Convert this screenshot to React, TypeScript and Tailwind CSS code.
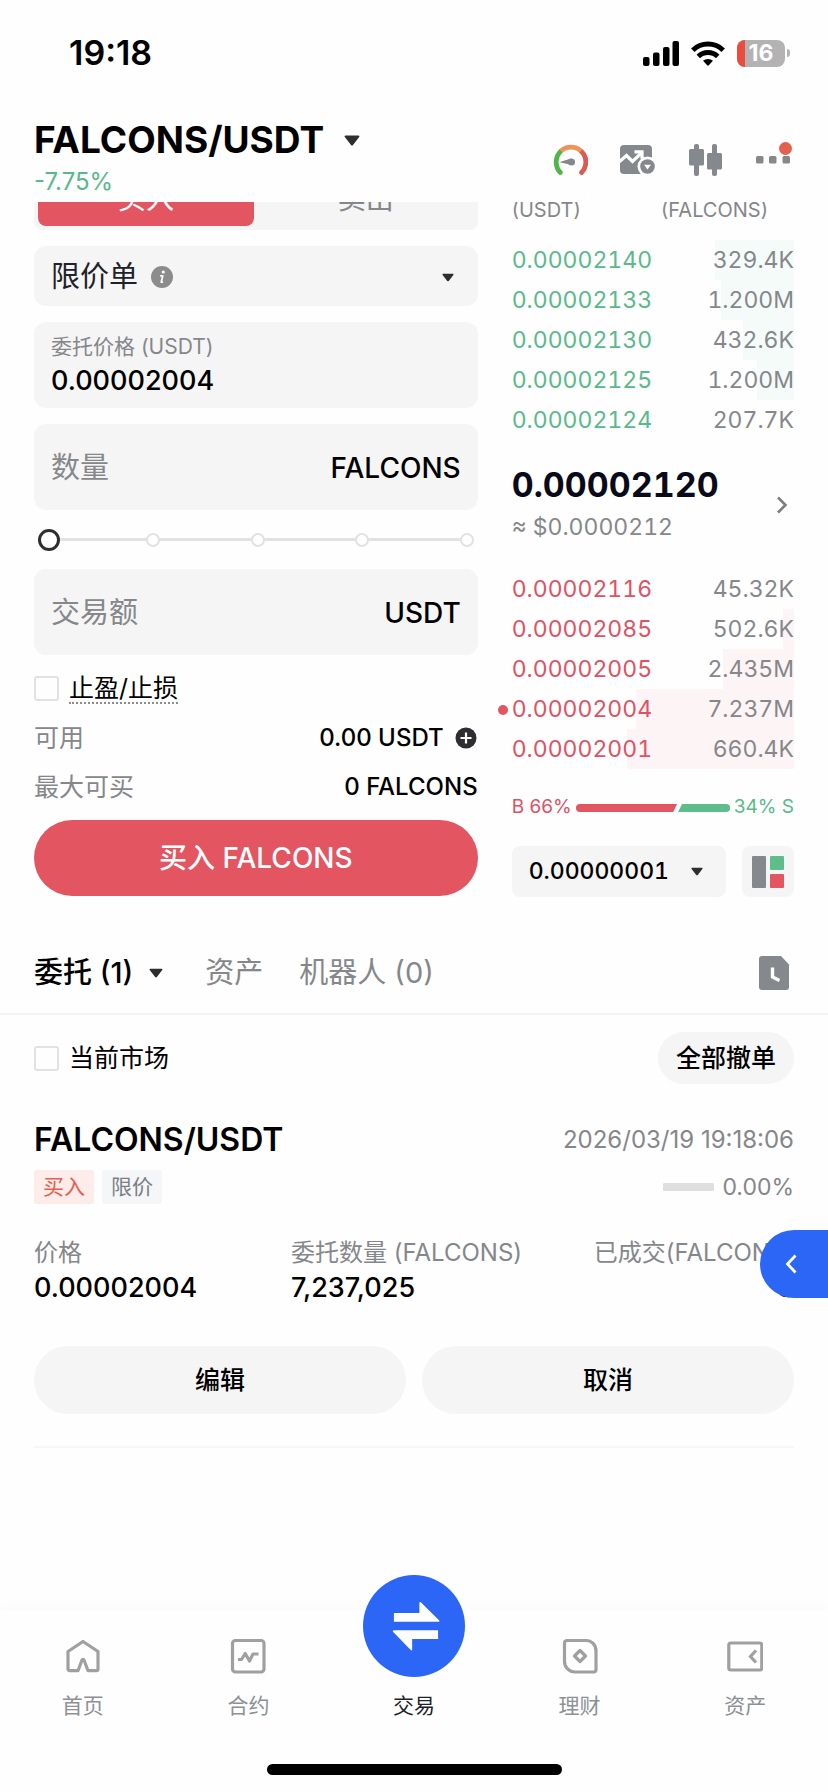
import { FunctionComponent, ReactNode } from "react";

type BookRow = {
  price: string;
  amount: string;
  depth: number;
  mine?: boolean;
};

const upperRows: BookRow[] = [
  { price: "0.00002140", amount: "329.4K", depth: 28 },
  { price: "0.00002133", amount: "1.200M", depth: 26 },
  { price: "0.00002130", amount: "432.6K", depth: 18 },
  { price: "0.00002125", amount: "1.200M", depth: 13 },
  { price: "0.00002124", amount: "207.7K", depth: 0 },
];

const lowerRows: BookRow[] = [
  { price: "0.00002116", amount: "45.32K", depth: 0 },
  { price: "0.00002085", amount: "502.6K", depth: 4 },
  { price: "0.00002005", amount: "2.435M", depth: 25 },
  { price: "0.00002004", amount: "7.237M", depth: 56, mine: true },
  { price: "0.00002001", amount: "660.4K", depth: 59 },
];

const Caret: FunctionComponent<{ className: string }> = ({ className }) => (
  <svg viewBox="0 0 16 11" className={className} aria-hidden="true">
    <path
      d="M1.6.5h12.8c.9 0 1.3.9.8 1.6L9 10c-.5.7-1.5.7-2 0L.8 2.100C.3 1.400.7.5 1.600.5z"
      fill="#2d2e32"
    />
  </svg>
);

const StatusBar = () => (
  <div className="flex h-[106px] items-center justify-between pr-[38px] pl-[69px]">
    <span className="text-[34px] leading-10 font-semibold text-black">
      19:18
    </span>
    <div className="flex items-center gap-3">
      <svg viewBox="0 0 36 25" className="h-[25px] w-9" aria-hidden="true">
        <rect x="0" y="16" width="6.500" height="9" rx="2" />
        <rect x="10" y="11.500" width="6.500" height="13.500" rx="2" />
        <rect x="20" y="6" width="6.500" height="19" rx="2" />
        <rect x="29.500" y="0" width="6.500" height="25" rx="2" />
      </svg>
      <svg viewBox="0 0 34 25" className="h-[25px] w-[34px]" aria-hidden="true">
        <g fill="none" stroke="#000" strokeWidth="5">
          <path d="M1.800 9.200a22 22 0 0 1 30.400 0" />
          <path d="M7.300 15.500a14 14 0 0 1 19.400 0" />
        </g>
        <path d="M12 19.800a7.500 7.500 0 0 1 10 0l-4.200 4.500c-.5.5-1.100.5-1.600 0z" />
      </svg>
      <div className="flex items-center gap-0.5">
        <div className="relative flex h-[27px] w-12 items-center justify-center overflow-hidden rounded-[8px] bg-[#b3b3b3]">
          <span className="absolute inset-y-0 left-0 w-2 bg-[#ea4d3d]" />
          <span className="relative text-[23px] leading-7 font-bold text-white">
            16
          </span>
        </div>
        <span className="h-2 w-[3px] rounded-r-full bg-[#b3b3b3]" />
      </div>
    </div>
  </div>
);

const Header = () => (
  <header className="flex h-24 items-center justify-between pt-3 pr-9 pl-[34px]">
    <div className="flex h-20 flex-col justify-start gap-2">
      <button className="flex items-center gap-5 text-[37px] leading-10 font-bold text-black">
        FALCONS/USDT
        <Caret className="h-[11px] w-4" />
      </button>
      <span className="text-2xl leading-7 text-[#58ba8a]">-7.75%</span>
    </div>
    <div className="flex items-center gap-8">
      <button aria-label="仪表">
        <svg viewBox="0 0 36 36" className="size-9" aria-hidden="true">
          <g fill="none" strokeWidth="4.800" strokeLinecap="round">
            <path d="M8.400 30.500A15 15 0 0 1 8.600 9.400" stroke="#4fb748" />
            <path d="M29.600 30.500A15 15 0 0 0 29.400 9.400" stroke="#dd5a50" />
            <path
              d="M9 9a15 15 0 0 1 20 0"
              stroke="#ee9457"
              strokeLinecap="butt"
            />
          </g>
          <path d="M8.500 19.700 19 16.600v6.200L8.500 20.500z" fill="#85888c" />
          <circle cx="19.500" cy="19.900" r="3.500" fill="#85888c" />
        </svg>
      </button>
      <button aria-label="行情图">
        <svg viewBox="0 0 36 36" className="size-9" aria-hidden="true">
          <rect x="0" y="3" width="32" height="29" rx="4" fill="#85888c" />
          <path
            d="M-1 20 6.500 13.500l6 6L22.500 10"
            fill="none"
            stroke="#fff"
            strokeWidth="3.200"
          />
          <path
            d="M14.500 9.800h7.500v7"
            fill="none"
            stroke="#fff"
            strokeWidth="3.200"
          />
          <circle cx="27.500" cy="24.500" r="10" fill="#fff" />
          <circle cx="27.500" cy="24.500" r="7.300" fill="#85888c" />
          <path d="M24 22.800h7l-3.500 4.800z" fill="#fff" />
        </svg>
      </button>
      <button aria-label="K线">
        <svg viewBox="0 0 36 36" className="size-9" aria-hidden="true">
          <g fill="#85888c">
            <rect x="6" y="2" width="5" height="32" rx="2" />
            <rect x="1" y="7" width="15" height="16.500" rx="1.500" />
            <rect x="24" y="2" width="5" height="32" rx="2" />
            <rect x="19" y="11" width="15" height="16.500" rx="1.500" />
          </g>
        </svg>
      </button>
      <button aria-label="更多">
        <svg viewBox="0 0 36 36" className="size-9" aria-hidden="true">
          <g fill="#85888c">
            <rect x="0" y="14" width="7.500" height="7.500" rx="1.500" />
            <rect x="13" y="14" width="7.500" height="7.500" rx="1.500" />
            <rect x="26.500" y="14" width="7.500" height="7.500" rx="1.500" />
          </g>
          <circle cx="29.500" cy="6.500" r="6.500" fill="#e4604f" />
        </svg>
      </button>
    </div>
  </header>
);

const OrderForm = () => (
  <form className="flex min-w-0 flex-col" onSubmit={(e) => e.preventDefault()}>
    <div className="flex h-[62px] gap-1 rounded-lg bg-[#f5f5f5] p-1 text-[28px] leading-8">
      <button
        type="button"
        className="flex-1 rounded-lg bg-[#e35561] text-white"
      >
        买入
      </button>
      <button type="button" className="flex-1 text-[#85878a]">
        卖出
      </button>
    </div>

    <div className="mt-4 flex h-[60px] items-center rounded-xl bg-[#f5f5f5] pt-0.5 pr-6 pl-[17px]">
      <select
        aria-label="订单类型"
        className="appearance-none text-[29px] leading-10 text-[#1e2229]"
      >
        <option>限价单</option>
      </select>
      <svg viewBox="0 0 22 22" className="ml-3 size-[22px]" aria-hidden="true">
        <circle cx="11" cy="11" r="11" fill="#8c8c8c" />
        <circle cx="12.300" cy="6" r="1.600" fill="#fff" />
        <path
          d="M9.200 9.800h2.600l-1.600 6.400h1.900"
          fill="none"
          stroke="#fff"
          strokeWidth="1.700"
          strokeLinejoin="round"
        />
      </svg>
      <Caret className="ml-auto h-[9px] w-3" />
    </div>

    <label className="mt-4 flex h-[86px] flex-col rounded-xl bg-[#f5f5f5] px-[17px] pt-[9px]">
      <span className="text-[21px] leading-8 text-[#85878a]">
        委托价格 (USDT)
      </span>
      <input
        defaultValue="0.00002004"
        inputMode="decimal"
        className="w-full text-[27px] leading-9 font-medium text-black outline-none"
      />
    </label>

    <label className="mt-4 flex h-[86px] items-center rounded-xl bg-[#f5f5f5] px-[17px] pt-0.5">
      <input
        placeholder="数量"
        className="w-0 flex-1 text-[29px] leading-10 outline-none placeholder:text-[#85878a]"
      />
      <span className="text-[28px] leading-10 font-medium text-black">
        FALCONS
      </span>
    </label>

    <div className="relative flex h-[59px] items-center pl-1">
      <div className="absolute right-3 left-4 h-[3px] bg-[#e2e2e2]" />
      <div className="absolute right-1 left-2 flex justify-between">
        {[0, 25, 50, 75, 100].map((mark) => (
          <span
            key={mark}
            className="size-3.5 rounded-full border-2 border-[#e2e2e2] bg-white"
          />
        ))}
      </div>
      <input
        type="range"
        aria-label="仓位比例"
        defaultValue={0}
        className="relative h-6 w-full appearance-none bg-transparent [&::-webkit-slider-thumb]:size-[22px] [&::-webkit-slider-thumb]:appearance-none [&::-webkit-slider-thumb]:rounded-full [&::-webkit-slider-thumb]:border-[3px] [&::-webkit-slider-thumb]:border-[#2d2e32] [&::-webkit-slider-thumb]:bg-white"
      />
    </div>

    <label className="flex h-[86px] items-center rounded-xl bg-[#f5f5f5] px-[17px] pt-0.5">
      <input
        placeholder="交易额"
        className="w-0 flex-1 text-[29px] leading-10 outline-none placeholder:text-[#85878a]"
      />
      <span className="text-[28px] leading-10 font-medium text-black">
        USDT
      </span>
    </label>

    <div className="flex flex-col py-[9px] text-[25px] leading-8">
      <label className="flex h-[49px] items-center gap-2.5 text-black">
        <input
          type="checkbox"
          className="size-[25px] appearance-none rounded-[3px] border-2 border-[#e2e2e2] checked:bg-[#2b66f6]"
        />
        <span className="border-b-2 border-dotted border-[#8c8c8c] leading-7">
          止盈/止损
        </span>
      </label>
      <div className="flex h-[49px] items-center justify-between">
        <span className="text-[#85878a]">可用</span>
        <span className="flex items-center gap-2.5 text-2xl font-medium text-black">
          0.00 USDT
          <button type="button" aria-label="充值">
            <svg viewBox="0 0 24 24" className="size-6" aria-hidden="true">
              <circle cx="12" cy="12" r="10.500" fill="#2d2e32" />
              <path d="M12 6.500v11M6.500 12h11" stroke="#fff" strokeWidth="2.200" />
            </svg>
          </button>
        </span>
      </div>
      <div className="flex h-[49px] items-center justify-between">
        <span className="text-[#85878a]">最大可买</span>
        <span className="text-2xl font-medium text-black">0 FALCONS</span>
      </div>
    </div>

    <button
      type="submit"
      className="h-[76px] rounded-full bg-[#e35561] text-[28px] leading-10 font-medium text-white"
    >
      买入 FALCONS
    </button>
  </form>
);

const BookSide: FunctionComponent<{
  rows: BookRow[];
  priceClass: string;
  depthClass: string;
}> = ({ rows, priceClass, depthClass }) => (
  <ul className="text-[23px] leading-10 tabular-nums">
    {rows.map((row) => (
      <li key={row.price} className="relative flex h-10 justify-between">
        <span
          className={`absolute inset-y-0 right-0 ${depthClass}`}
          style={{ width: `${row.depth}%` }}
        />
        {row.mine && (
          <span className="absolute top-4 -left-3.5 size-2.5 rounded-full bg-[#e35561]" />
        )}
        <span className={`relative ${priceClass}`}>{row.price}</span>
        <span className="relative text-[#85878a]">{row.amount}</span>
      </li>
    ))}
  </ul>
);

const OrderBook = () => (
  <div className="flex min-w-0 flex-col">
    <div className="flex justify-between pt-7 pr-[26px] text-xl leading-7 text-[#85878a]">
      <span>(USDT)</span>
      <span>(FALCONS)</span>
    </div>
    <div className="mt-4">
      <BookSide
        rows={upperRows}
        priceClass="text-[#58ba8a]"
        depthClass="bg-[#f5fbf9]"
      />
    </div>
    <button className="flex h-[129px] items-center justify-between pr-1.5 text-left">
      <span className="flex flex-col tabular-nums">
        <span className="text-[34px] leading-[44px] font-bold text-[#0a0b1a]">
          0.00002120
        </span>
        <span className="text-[23px] leading-10 text-[#85878a]">
          ≈ $0.0000212
        </span>
      </span>
      <svg viewBox="0 0 12 18" className="h-[18px] w-3" aria-hidden="true">
        <path
          d="M2 1.500 9.500 9 2 16.500"
          fill="none"
          stroke="#7c7e81"
          strokeWidth="2.600"
        />
      </svg>
    </button>
    <BookSide
      rows={lowerRows}
      priceClass="text-[#de5263]"
      depthClass="bg-[#fdf4f5]"
    />
    <div className="flex h-[77px] items-center gap-1 text-[19px]">
      <span className="whitespace-nowrap text-[#de5263]">B 66%</span>
      <svg
        viewBox="0 0 157 8"
        preserveAspectRatio="none"
        className="h-2 min-w-0 flex-1"
        aria-hidden="true"
      >
        <path d="M4 0h99l-4 8H4a4 4 0 0 1 0-8z" fill="#e35561" />
        <path d="M108 0h45a4 4 0 0 1 0 8h-49z" fill="#5dbe8c" />
      </svg>
      <span className="whitespace-nowrap text-[#58ba8a]">34% S</span>
    </div>
    <div className="flex gap-4">
      <div className="relative flex h-[51px] flex-1 items-center rounded-lg bg-[#f5f5f5]">
        <select
          aria-label="价格精度"
          className="h-full w-full appearance-none pl-[17px] text-[23px] font-medium text-black tabular-nums"
        >
          <option>0.00000001</option>
        </select>
        <Caret className="pointer-events-none absolute right-[23px] h-[9px] w-3" />
      </div>
      <button
        aria-label="盘口布局"
        className="flex h-[51px] w-[52px] items-center justify-center rounded-lg bg-[#f5f5f5]"
      >
        <svg viewBox="0 0 32 32" className="size-8" aria-hidden="true">
          <rect width="14" height="32" rx="1" fill="#85888c" />
          <rect x="18" width="14" height="14" rx="1" fill="#5dbe8c" />
          <rect x="18" y="18" width="14" height="14" rx="1" fill="#e35561" />
        </svg>
      </button>
    </div>
  </div>
);

const OrderTabs = () => (
  <nav className="flex h-[82px] items-center border-b-2 border-[#f3f3f3] px-[34px] text-[29px] leading-10 text-[#85878a]">
    <button className="flex items-center gap-4 font-medium text-black">
      委托 (1)
      <Caret className="h-2.5 w-3.5" />
    </button>
    <button className="ml-[42px]">资产</button>
    <button className="ml-9">机器人 (0)</button>
    <button className="ml-auto pr-1" aria-label="历史订单">
      <svg viewBox="0 0 32 34" className="h-[34px] w-8" aria-hidden="true">
        <path
          d="M4 0h19l8 8.500V31a3 3 0 0 1-3 3H4a3 3 0 0 1-3-3V3a3 3 0 0 1 3-3z"
          fill="#85888c"
        />
        <path
          d="M14.500 11.500v9.500l7 3.500"
          fill="none"
          stroke="#fff"
          strokeWidth="3.400"
        />
      </svg>
    </button>
  </nav>
);

const Stat: FunctionComponent<{
  label: string;
  value: string;
  right?: boolean;
}> = ({ label, value, right }) => (
  <div className={right ? "text-right" : ""}>
    <dt className="text-2xl leading-[34px] whitespace-nowrap text-[#85878a]">
      {label}
    </dt>
    <dd className="text-[27px] leading-9 font-medium text-black">{value}</dd>
  </div>
);

const OpenOrder = () => (
  <article>
    <div className="flex items-center justify-between px-[34px] pt-9">
      <h2 className="text-[32px] leading-10 font-semibold text-black">
        FALCONS/USDT
      </h2>
      <time className="text-2xl leading-10 text-[#85878a]">
        2026/03/19 19:18:06
      </time>
    </div>
    <div className="mt-2.5 flex h-[34px] items-center justify-between px-[34px]">
      <div className="flex gap-2 text-[21px] leading-[34px]">
        <span className="rounded-[3px] bg-[#fdecea] px-[9px] text-[#e4604f]">
          买入
        </span>
        <span className="rounded-[3px] bg-[#f5f6f7] px-[9px] text-[#7b8086]">
          限价
        </span>
      </div>
      <div className="flex items-center gap-2 text-[23px] text-[#85878a]">
        <span className="h-2 w-[51px] rounded-[1px] bg-[#dfdfdf]" />
        0.00%
      </div>
    </div>
    <div className="relative mt-8 px-[34px]">
      <dl className="grid grid-cols-[257px_1fr_auto]">
        <Stat label="价格" value="0.00002004" />
        <Stat label="委托数量 (FALCONS)" value="7,237,025" />
        <Stat label="已成交(FALCONS)" value="0" right />
      </dl>
      <button
        aria-label="展开"
        className="absolute top-[-6px] right-0 flex h-[68px] w-[68px] items-center rounded-l-full bg-[#2b66f6] pl-[25px]"
      >
        <svg viewBox="0 0 12 20" className="h-5 w-3" aria-hidden="true">
          <path
            d="M10.500 1.500 2.500 10l8 8.500"
            fill="none"
            stroke="#fff"
            strokeWidth="2.800"
          />
        </svg>
      </button>
    </div>
    <div className="mt-10 flex gap-4 px-[34px] text-[25px] leading-8 font-medium text-black">
      <button className="h-[68px] flex-1 rounded-full bg-[#f5f5f5]">
        编辑
      </button>
      <button className="h-[68px] flex-1 rounded-full bg-[#f5f5f5]">
        取消
      </button>
    </div>
    <hr className="mx-[34px] mt-8 border-t-2 border-[#f7f7f7]" />
  </article>
);

const NavItem: FunctionComponent<{ label: string; children: ReactNode }> = ({
  label,
  children,
}) => (
  <a
    href="#"
    className="flex flex-1 flex-col items-center gap-4 pt-7 text-[21px] leading-8 text-[#8d9094]"
  >
    <svg
      viewBox="0 0 36 36"
      className="size-9"
      fill="none"
      stroke="#a0a0a0"
      strokeWidth="3.200"
      strokeLinejoin="round"
      aria-hidden="true"
    >
      {children}
    </svg>
    {label}
  </a>
);

const BottomNav = () => (
  <footer className="sticky bottom-0 mt-auto bg-[#fefefe] shadow-[0_-4px_12px_rgba(0,0,0,0.02)]">
    <nav className="flex h-[154px]">
      <NavItem label="首页">
        <path d="M3 13.500 18 3.500l15 10V31c0 1-.7 1.700-1.700 1.700H23L19 22c-.4-1-1.600-1-2 0l-4 10.700H4.700C3.700 32.700 3 32 3 31z" />
      </NavItem>
      <NavItem label="合约">
        <rect x="2.500" y="2.500" width="31.500" height="31.500" rx="3" />
        <path d="M8 21.500h3.500l3.700-6 4.300 7.500 3.500-7h5.500" />
      </NavItem>
      <a
        href="#"
        className="relative flex flex-1 flex-col items-center pt-20 text-[21px] leading-8 text-[#1e2229]"
      >
        <span className="absolute -top-[35px] flex size-[102px] items-center justify-center rounded-full bg-[#2b66f6] pl-1">
          <svg
            viewBox="0 0 50 52"
            className="h-[50px] w-12"
            fill="#fff"
            aria-hidden="true"
          >
            <path d="M2 12.500h26.500V1.800c0-1 .8-1.200 1.500-.5L49 20c.8.900.4 1.700-.7 1.700H2z" />
            <path d="M48 39.500H21v11c0 1-.8 1.200-1.500.5L1.300 32.200C.5 31.300.9 30.300 2 30.300h46z" />
          </svg>
        </span>
        交易
      </a>
      <NavItem label="理财">
        <path d="M5 2.500h18.500A10 10 0 0 1 34 13v18.500a2.500 2.500 0 0 1-2.500 2.500H13A10.500 10.500 0 0 1 2.500 23.500V5A2.500 2.500 0 0 1 5 2.500z" />
        <path d="M18 12.500l5.500 5.500-5.500 5.500-5.500-5.500z" />
      </NavItem>
      <NavItem label="资产">
        <rect x="1.800" y="5" width="33" height="27" rx="2" />
        <path d="M29 12.500 23.500 18.500l5.500 6" strokeLinejoin="miter" />
      </NavItem>
    </nav>
    <div className="mx-auto mb-[17px] h-[11px] w-[295px] rounded-full bg-black" />
  </footer>
);

export default function App() {
  return (
    <div className="flex min-h-screen flex-col bg-[#fefefe] font-['Inter','Noto_Sans_CJK_SC',sans-serif]">
      <StatusBar />
      <Header />
      <main>
        {/* the trading panel is scrolled a little way under the header */}
        <div className="overflow-hidden">
          <section className="-mt-[34px] grid grid-cols-[11fr_7fr] gap-[34px] px-[34px] pb-9">
            <OrderForm />
            <OrderBook />
          </section>
        </div>
        <OrderTabs />
        <div className="flex items-center justify-between px-[34px] pt-[17px] text-[25px] leading-8 text-black">
          <label className="flex items-center gap-2.5">
            <input
              type="checkbox"
              className="size-[25px] appearance-none rounded-[3px] border-2 border-[#e2e2e2] checked:bg-[#2b66f6]"
            />
            当前市场
          </label>
          <button className="h-[52px] rounded-full bg-[#f5f5f5] px-[18px] font-medium">
            全部撤单
          </button>
        </div>
        <OpenOrder />
      </main>
      <BottomNav />
    </div>
  );
}
